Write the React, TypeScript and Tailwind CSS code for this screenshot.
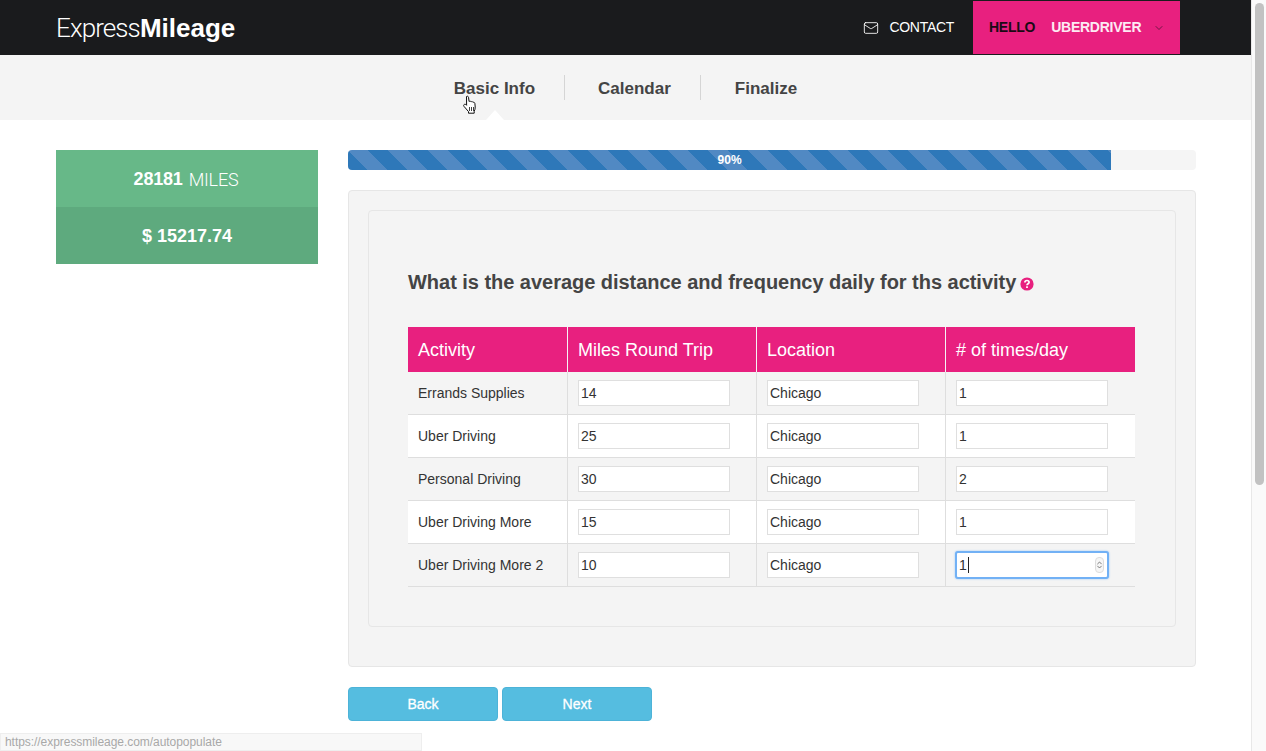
import { ChevronDown, ChevronsUpDown, Mail } from "lucide-react";

interface ActivityRow {
  name: string;
  miles: string;
  location: string;
  times: string;
}

const ROWS: ActivityRow[] = [
  { name: "Errands Supplies", miles: "14", location: "Chicago", times: "1" },
  { name: "Uber Driving", miles: "25", location: "Chicago", times: "1" },
  { name: "Personal Driving", miles: "30", location: "Chicago", times: "2" },
  { name: "Uber Driving More", miles: "15", location: "Chicago", times: "1" },
  { name: "Uber Driving More 2", miles: "10", location: "Chicago", times: "1" },
];

const HEADINGS = ["Activity", "Miles Round Trip", "Location", "# of times/day"];

/** Read-only looking input box from the table cells. */
function CellInput({ value, focused }: { value: string; focused?: boolean }) {
  if (focused) {
    return (
      <div className="-ml-px flex h-[28px] w-[154px] items-center justify-between rounded-[3px] border-2 border-[#72b1f5] bg-white pl-[2px] pr-[3px] text-[14px] text-[#333] shadow-[0_0_2px_#8fc2f8]">
        <span className="flex items-center">
          {value}
          <span className="ml-[1px] h-[16px] w-px bg-[#222]" />
        </span>
        <span className="flex h-[16px] w-[9px] items-center justify-center rounded-[4px] border border-[#ddd] bg-[#f6f6f6]">
          <ChevronsUpDown className="h-[12px] w-[9px] shrink-0 text-[#555]" strokeWidth={2} />
        </span>
      </div>
    );
  }
  return (
    <div className="flex h-[26px] w-[152px] items-center border border-[#dfdfdf] bg-white pl-[2px] text-[14px] text-[#333]">
      {value}
    </div>
  );
}

function Header() {
  return (
    <header className="flex h-[55px] items-center justify-between bg-[#1a1b1d] pl-[56px] pr-[71px]">
      <div className="text-[26px] leading-none text-white">
        <span className="font-['Roboto',sans-serif] font-light tracking-[-0.9px]">Express</span>
        <span className="font-bold">Mileage</span>
      </div>
      <div className="flex h-full items-center">
        <Mail className="mr-[10px] h-[16px] w-[16px] text-white" strokeWidth={1.3} />
        <span className="mr-[19px] text-[14px] tracking-[-0.3px] text-white">CONTACT</span>
        <div className="flex h-[53px] w-[207px] items-center bg-[#e8207f] pl-[16px] text-[14px] font-bold tracking-[-0.25px]">
          <span className="text-[#1a0a14]">HELLO</span>
          <span className="ml-[16px] text-[#fdeaf3]">UBERDRIVER</span>
          <ChevronDown className="ml-[12px] h-[12px] w-[12px] text-[#4a1030]" strokeWidth={1.5} />
        </div>
      </div>
    </header>
  );
}

function StepNav() {
  return (
    <nav className="relative flex h-[65px] items-center justify-center bg-[#f4f4f4] pt-[3px] text-[17px] font-bold text-[#444]">
      <span className="pr-[29px]">Basic Info</span>
      <span className="-mt-[3px] h-[25px] w-px bg-[#d5d5d5]" />
      <span className="pl-[33px] pr-[29px]">Calendar</span>
      <span className="-mt-[3px] h-[25px] w-px bg-[#d5d5d5]" />
      <span className="pl-[34px]">Finalize</span>
      <span className="absolute bottom-0 left-[486px] h-0 w-0 border-x-[9px] border-b-[10px] border-x-transparent border-b-white" />
    </nav>
  );
}

function Totals() {
  return (
    <aside className="w-[262px] text-center text-white">
      <div className="flex h-[57px] items-center justify-center bg-[#67b888] pr-[2px] pt-[2px] text-[18px] tracking-[-0.2px]">
        <b>28181</b>
        <span className="ml-[6px] font-['Roboto',sans-serif] font-light">MILES</span>
      </div>
      <div className="flex h-[57px] items-center justify-center bg-[#5eaa7e] pt-[2px] text-[18px] font-bold">
        $ 15217.74
      </div>
    </aside>
  );
}

function ProgressBar() {
  return (
    <div className="h-[20px] overflow-hidden rounded-[4px] bg-[#f5f5f5]">
      <div className="flex h-full w-[90%] items-center justify-center bg-[repeating-linear-gradient(45deg,#2e78b9_0,#2e78b9_14.14px,#5189c3_14.14px,#5189c3_28.28px)] text-[12px] font-bold text-white">
        90%
      </div>
    </div>
  );
}

function HelpIcon() {
  return (
    <svg viewBox="0 0 14 14" className="ml-[4px] mt-[3px] h-[14px] w-[14px]">
      <circle cx="7" cy="7" r="6.6" fill="#e8207f" />
      <path
        d="M4.900 5.400c0-1.200.9-1.900 2.100-1.900s2.100.7 2.100 1.800c0 1.500-2.100 1.500-2.100 3"
        fill="none"
        stroke="#fff"
        strokeWidth="1.700"
      />
      <rect x="6.100" y="9.300" width="1.800" height="1.700" fill="#fff" />
    </svg>
  );
}

function ActivityTable() {
  return (
    <table className="w-[727px] table-fixed border-separate border-spacing-0 text-[14px] text-[#333]">
      <colgroup>
        <col className="w-[160px]" />
        <col className="w-[189px]" />
        <col className="w-[189px]" />
        <col className="w-[189px]" />
      </colgroup>
      <thead>
        <tr className="h-[45px] bg-[#e8207f] text-left text-[18px] text-white">
          {HEADINGS.map((heading, i) => (
            <th
              key={heading}
              className={`px-[10px] pt-[2px] font-normal ${i < 3 ? "border-r border-[#f4f4f4]" : ""}`}
            >
              {heading}
            </th>
          ))}
        </tr>
      </thead>
      <tbody>
        {ROWS.map((row, i) => (
          <tr key={row.name} className={`h-[43px] ${i % 2 === 1 ? "bg-white" : "bg-[#f4f4f4]"}`}>
            <td className="border-r border-b border-[#dedede] px-[10px]">{row.name}</td>
            <td className="border-r border-b border-[#dedede] px-[10px]">
              <CellInput value={row.miles} />
            </td>
            <td className="border-r border-b border-[#dedede] px-[10px]">
              <CellInput value={row.location} />
            </td>
            <td className="border-b border-[#dedede] px-[10px]">
              <CellInput value={row.times} focused={i === ROWS.length - 1} />
            </td>
          </tr>
        ))}
      </tbody>
    </table>
  );
}

function MainColumn() {
  return (
    <main className="w-[848px]">
      <ProgressBar />
      <section className="mt-[20px] h-[477px] rounded-[4px] border border-[#e6e6e6] bg-[#f4f4f4] p-[19px]">
        <div className="h-[417px] rounded-[4px] border border-[#e6e6e6] px-[39px] pt-[58px]">
          <h2 className="flex items-center text-[20px] leading-[26px] font-bold tracking-[-0.03px] text-[#444]">
            What is the average distance and frequency daily for ths activity
            <HelpIcon />
          </h2>
          <div className="mt-[32px]">
            <ActivityTable />
          </div>
        </div>
      </section>
      <div className="mt-[20px] flex gap-[4px]">
        <button className="h-[34px] w-[150px] rounded-[4px] border border-[#4db3d8] bg-[#55bde0] text-[14px] text-white [-webkit-text-stroke:0.3px_#fff]">
          Back
        </button>
        <button className="h-[34px] w-[150px] rounded-[4px] border border-[#4db3d8] bg-[#55bde0] text-[14px] text-white [-webkit-text-stroke:0.3px_#fff]">
          Next
        </button>
      </div>
    </main>
  );
}

function HandCursor() {
  return (
    <svg
      viewBox="0 0 16 20"
      className="absolute left-[462px] top-[95px] h-[20px] w-[16px]"
      fill="#fff"
      stroke="#111"
      strokeWidth="1"
      strokeLinejoin="round"
    >
      <path d="M4.5 1.5c.8-.6 1.8-.2 2 .8l.6 4.2c.7-.5 1.7-.3 2 .3.7-.4 1.6-.2 1.9.5.8-.3 1.8.2 1.9 1.2l.3 3.5c.1 1.6-.3 3-1 4.2v2H6.5v-1.6L2 11.4c-.6-.8-.4-1.7.4-2 .7-.3 1.500 0 2.200.900z" />
      <path d="M7.500 12v4M9.500 12v4M11.500 12v4" fill="none" strokeWidth="0.8" />
    </svg>
  );
}

export default function App() {
  return (
    <div className="relative flex h-[751px] w-[1266px] overflow-hidden bg-white font-['Liberation_Sans',Arial,sans-serif]">
      <div className="w-[1251px]">
        <Header />
        <StepNav />
        <div className="flex gap-[30px] pl-[56px] pt-[30px]">
          <Totals />
          <MainColumn />
        </div>
      </div>
      <div className="h-full w-[15px] border-l border-[#e8e8e8] bg-[#fafafa] pl-[3px] pt-[3px]">
        <div className="h-[482px] w-[9px] rounded-full bg-[#c2c2c2]" />
      </div>
      <HandCursor />
      <div className="absolute bottom-0 left-0 flex h-[18px] w-[422px] items-center border border-[#eee] bg-[#f8f8f8] pl-[4px] text-[12px] tracking-[-0.05px] text-[#a8a8a8]">
        https://expressmileage.com/autopopulate
      </div>
    </div>
  );
}
